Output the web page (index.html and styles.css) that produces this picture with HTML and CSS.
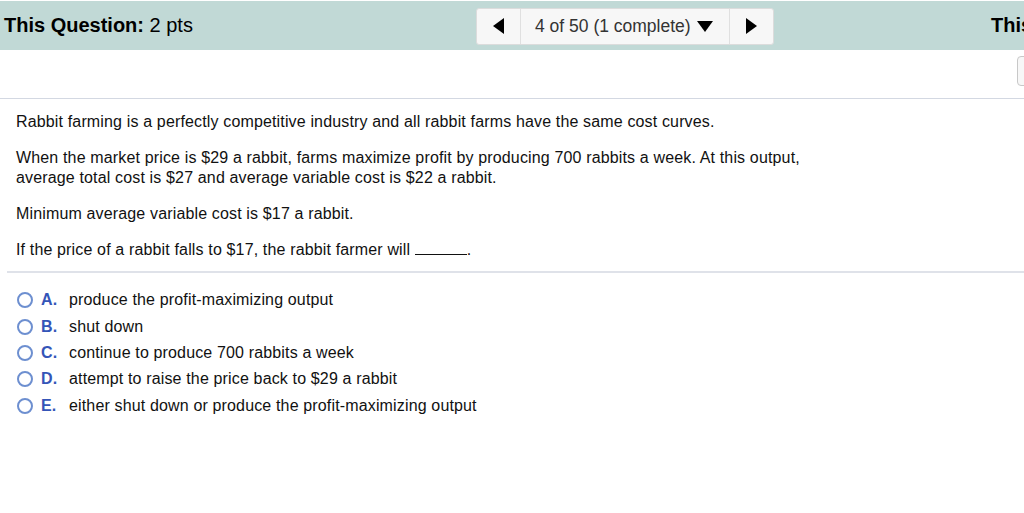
FILE: index.html
```html
<!DOCTYPE html>
<html>
<head>
<meta charset="utf-8">
<title>This Question</title>
<link rel="stylesheet" href="styles.css">
</head>
<body>
	<div class="top_bar">
		<div class="q_title"><b>This Question:</b> 2 pts</div>
		<div class="q_nav">
			<span class="nav_btn"><span class="tri_left"></span></span>
			<span class="nav_mid">4 of 50 (1 complete) <span class="tri_down"></span></span>
			<span class="nav_btn"><span class="tri_right"></span></span>
		</div>
		<div class="q_title q_right"><b>This Test:</b> 100 pts</div>
	</div>
	<div class="tool_row">
		<span class="tool_btn"></span>
	</div>
	<div class="question">
		<p>Rabbit farming is a perfectly competitive industry and all rabbit farms have the same cost curves.</p>
		<p>When the market price is $29 a rabbit, farms maximize profit by producing 700 rabbits a week. At this output,<br>average total cost is $27 and average variable cost is $22 a rabbit.</p>
		<p>Minimum average variable cost is $17 a rabbit.</p>
		<p>If the price of a rabbit falls to $17, the rabbit farmer will <span class="blank"></span>.</p>
	</div>
	<ul class="answers">
		<li><span class="radio"></span><span class="letter">A.</span>produce the profit-maximizing output</li>
		<li><span class="radio"></span><span class="letter">B.</span>shut down</li>
		<li><span class="radio"></span><span class="letter">C.</span>continue to produce 700 rabbits a week</li>
		<li><span class="radio"></span><span class="letter">D.</span>attempt to raise the price back to $29 a rabbit</li>
		<li><span class="radio"></span><span class="letter">E.</span>either shut down or produce the profit-maximizing output</li>
	</ul>
</body>
</html>
```

FILE: styles.css
```css
html,body{margin:0;padding:0;background:#fff;overflow:hidden;}
body{font-family:"Liberation Sans",Arial,Helvetica,sans-serif;color:#111;font-size:16px;letter-spacing:0.15px;width:1024px;}
.top_bar{height:49px;margin-top:1px;background:#c1d9d6;display:flex;align-items:center;white-space:nowrap;overflow:hidden;letter-spacing:0;}
.q_title{font-size:20px;color:#000;flex:0 0 472px;padding-left:4px;}
.q_title b{font-weight:bold;}
.q_nav{display:flex;height:35px;border:1px solid #dcdcdc;border-radius:3px;background:#f7f7f7;flex:0 0 auto;margin-top:1px;}
.nav_btn{width:43px;display:flex;align-items:center;justify-content:center;}
.nav_mid{display:flex;align-items:center;padding:0 0 0 14px;font-size:17.5px;color:#333;border-left:1px solid #e0e0e0;border-right:1px solid #e0e0e0;width:194px;}
.tri_left{width:0;height:0;border-top:8px solid transparent;border-bottom:8px solid transparent;border-right:11px solid #000;}
.tri_right{width:0;height:0;border-top:8px solid transparent;border-bottom:8px solid transparent;border-left:11px solid #000;}
.tri_down{width:0;height:0;border-left:8px solid transparent;border-right:8px solid transparent;border-top:11px solid #000;margin-left:6px;}
.q_right{flex:0 0 auto;margin-left:217px;padding-left:0;}
.tool_row{height:48px;border-bottom:1px solid #d3d8e2;position:relative;}
.tool_btn{position:absolute;left:1017px;top:6px;width:30px;height:28px;border:1px solid #c8c8c8;border-radius:4px;background:#f7f7f7;}
.question{padding:13px 16px 11px 9px;margin-left:7px;border-bottom:2px solid #dfe2e9;}
.question p{margin:0 0 16px 0;line-height:20px;}
.question p:last-child{margin-bottom:0;}
.blank{display:inline-block;width:52px;border-bottom:1px solid #111;vertical-align:baseline;}
.answers{list-style:none;margin:0;padding:14px 0 0 17px;}
.answers li{height:26.4px;display:flex;align-items:center;line-height:20px;}
.radio{width:12px;height:12px;border:2px solid #6d8fd0;border-radius:50%;margin-right:8px;}
.letter{color:#3455b8;font-weight:bold;width:28px;}
```
